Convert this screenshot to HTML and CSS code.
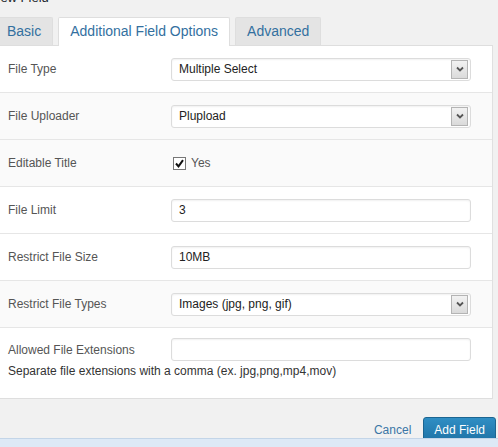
FILE: index.html
```html
<!DOCTYPE html>
<html>
<head>
<meta charset="utf-8">
<link rel="stylesheet" href="styles.css">
</head>
<body>
<div class="page">
  <div class="title">New Field</div>
  <div class="tabs">
    <span class="tab">Basic</span>
    <span class="tab active">Additional Field Options</span>
    <span class="tab">Advanced</span>
  </div>
  <div class="panel">
    <div class="row">
      <div class="label">File Type</div>
      <div class="select"><span class="select-text">Multiple Select</span><span class="arrow"><svg width="8" height="6" viewBox="0 0 8 6"><polyline points="1,1.5 4,4.5 7,1.5" fill="none" stroke="#555" stroke-width="1.8"/></svg></span></div>
    </div>
    <div class="row alt">
      <div class="label">File Uploader</div>
      <div class="select"><span class="select-text">Plupload</span><span class="arrow"><svg width="8" height="6" viewBox="0 0 8 6"><polyline points="1,1.5 4,4.5 7,1.5" fill="none" stroke="#555" stroke-width="1.8"/></svg></span></div>
    </div>
    <div class="row alt">
      <div class="label">Editable Title</div>
      <div class="check-wrap">
        <span class="checkbox"><svg width="11" height="11" viewBox="0 0 11 11"><polyline points="2,5.5 4.5,8.3 9,2.2" fill="none" stroke="#111" stroke-width="2"/></svg></span>
        <span class="check-label">Yes</span>
      </div>
    </div>
    <div class="row">
      <div class="label">File Limit</div>
      <div class="input">3</div>
    </div>
    <div class="row">
      <div class="label">Restrict File Size</div>
      <div class="input">10MB</div>
    </div>
    <div class="row alt">
      <div class="label">Restrict File Types</div>
      <div class="select"><span class="select-text">Images (jpg, png, gif)</span><span class="arrow"><svg width="8" height="6" viewBox="0 0 8 6"><polyline points="1,1.5 4,4.5 7,1.5" fill="none" stroke="#555" stroke-width="1.8"/></svg></span></div>
    </div>
    <div class="row-last">
      <div class="row-line">
        <div class="label">Allowed File Extensions</div>
        <div class="input"></div>
      </div>
      <div class="desc">Separate file extensions with a comma (ex. jpg,png,mp4,mov)</div>
    </div>
  </div>
  <div class="actions">
    <a class="cancel" href="#">Cancel</a>
    <button class="btn" type="button">Add Field</button>
  </div>
</div>
<div class="strip"></div>
</body>
</html>
```
FILE: styles.css
```css
html, body {
  margin: 0;
  padding: 0;
}
body {
  background: #f1f1f1;
  font-family: "Liberation Sans", Arial, sans-serif;
  font-size: 12px;
  color: #333;
  width: 498px;
  height: 447px;
  overflow: hidden;
}
.page {
  width: 498px;
}
.title {
  font-size: 13px;
  line-height: 16px;
  height: 16px;
  margin-top: -10px;
  margin-bottom: 11px;
  margin-left: -9px;
  color: #23282d;
}
.tabs {
  display: flex;
  align-items: flex-end;
  gap: 5px;
  margin-left: -5px;
  height: 28px;
  position: relative;
  z-index: 1;
}
.tab {
  box-sizing: border-box;
  height: 28px;
  padding: 0 11px 0 11px;
  line-height: 27px;
  font-size: 14px;
  color: #33709f;
  background: #e4e4e4;
  border: 1px solid #dedede;
  border-bottom: none;
  border-radius: 2px 2px 0 0;
}
.tab.active {
  background: #fff;
  height: 29px;
  margin-bottom: -1px;
  line-height: 27px;
}
.panel {
  width: 492px;
  background: #fff;
  border-top: 1px solid #dedede;
  border-right: 1px solid #e0e0e0;
  border-bottom: 1px solid #dedede;
}
.row {
  display: flex;
  align-items: center;
  height: 46px;
  border-bottom: 1px solid #e6e6e6;
}
.row.alt {
  background: #fafafa;
}
.label {
  box-sizing: border-box;
  width: 171px;
  padding-left: 8px;
  color: #555;
  font-size: 12px;
}
.select, .input {
  box-sizing: border-box;
  width: 300px;
  height: 23px;
  border: 1px solid #dcdcdc;
  border-radius: 3px;
  background: #fff;
  box-shadow: inset 0 1px 2px rgba(0, 0, 0, 0.06);
  display: flex;
  align-items: center;
  padding-left: 7px;
  font-size: 12px;
  color: #222;
}
.select {
  justify-content: space-between;
  padding-right: 2px;
}
.arrow {
  box-sizing: border-box;
  width: 17px;
  height: 19px;
  border: 1px solid #b4b4b4;
  background: linear-gradient(#f2f2f2, #dadada);
  display: flex;
  align-items: center;
  justify-content: center;
}
.check-wrap {
  display: flex;
  align-items: center;
  padding-left: 2px;
}
.checkbox {
  box-sizing: border-box;
  width: 13px;
  height: 13px;
  border: 1px solid #777;
  background: #fff;
  display: flex;
  align-items: center;
  justify-content: center;
}
.check-label {
  margin-left: 5px;
  color: #555;
  font-size: 12px;
}
.row-last {
  padding: 10px 0 19px 0;
}
.row-line {
  display: flex;
  align-items: center;
}
.desc {
  padding-left: 8px;
  margin-top: 3px;
  line-height: 15px;
  color: #333;
  font-size: 12px;
}
.actions {
  display: flex;
  justify-content: flex-end;
  align-items: center;
  gap: 12px;
  margin-top: 18px;
  padding-right: 2px;
}
.cancel {
  color: #3a76a6;
  text-decoration: none;
  font-size: 12px;
}
.btn {
  height: 25px;
  padding: 0 10px;
  font-family: "Liberation Sans", Arial, sans-serif;
  font-size: 12px;
  color: #fff;
  background: linear-gradient(#2f8ec4, #1f73a6);
  border: 1px solid #1c6591;
  border-radius: 3px;
  line-height: 22px;
}
.strip {
  position: fixed;
  left: 0;
  right: 0;
  bottom: 0;
  height: 9px;
  background: #dde9f6;
  border-top: 1px solid #c3d5e8;
  box-sizing: border-box;
}
```
